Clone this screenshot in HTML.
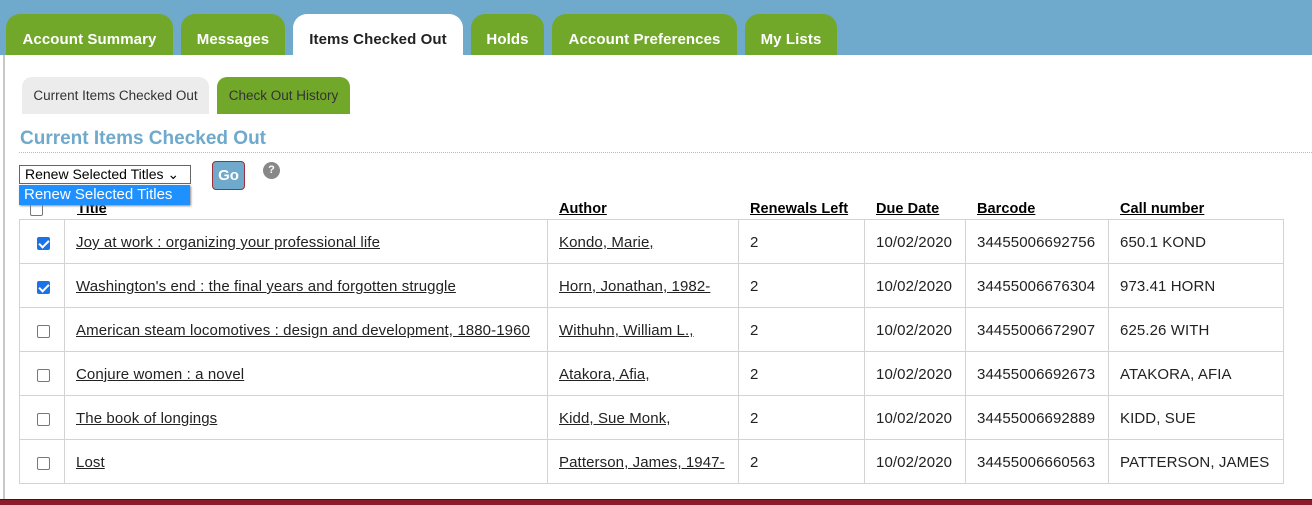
<!DOCTYPE html>
<html><head><style>
*{margin:0;padding:0;box-sizing:border-box}
body{width:1312px;height:505px;overflow:hidden;background:#fff;font-family:"Liberation Sans",Arial,sans-serif;position:relative}
.top{position:absolute;left:0;top:0;width:1312px;height:55px;background:#6fa9cb}
.lb{position:absolute;left:3px;top:55px;width:2px;height:450px;background:#c8c8c8}
.tab{position:absolute;top:14px;height:41px;background:#72a82a;color:#fff;font-weight:bold;font-size:15px;border-radius:14px 14px 0 0;text-align:center;line-height:51px;letter-spacing:.1px}
.tab.a{background:#fff;color:#222}
.st{position:absolute;top:77px;height:37px;font-size:13.5px;line-height:37px;text-align:center;border-radius:10px 10px 0 0;color:#333}
h2{position:absolute;left:20px;top:128px;font-size:19px;color:#6fa9cb;font-weight:bold}
.dot{position:absolute;left:19px;right:0;top:152px;border-top:1px dotted #bbb}
.sel{position:absolute;left:19px;top:165px;width:172px;height:19px;border:1px solid #666;font-size:14px;line-height:17px;padding-left:5px;color:#000;background:#fff}
.dd{position:absolute;left:19px;top:185px;width:171px;height:20px;background:#1e90ff;color:#fff;font-size:15px;line-height:20px;padding-left:5px;box-shadow:1px 1px 2px #888}
.go{position:absolute;left:212px;top:161px;width:33px;height:29px;background:#6fa9cb;border:1px solid #9b2f3c;border-radius:4px;color:#fff;font-weight:bold;font-size:15px;text-align:center;line-height:27px}
.q{position:absolute;left:263px;top:162px;width:17px;height:17px;border-radius:50%;background:#888;color:#fff;font-size:11px;font-weight:bold;text-align:center;line-height:17px}
.h{position:absolute;top:201px;font-size:14.5px;font-weight:bold;text-decoration:underline;color:#000;letter-spacing:.05px}
table{position:absolute;left:19px;top:219px;border-collapse:collapse;font-size:15px;letter-spacing:.1px;color:#222}
td{border:1px solid #d3d3d3;height:44px;padding-left:11px;padding-top:2px;white-space:nowrap}
td a{color:#222;text-decoration:underline}
.cb{width:13px;height:13px;border:1px solid #777;border-radius:2px;display:inline-block;margin-left:6px;vertical-align:middle}
.cb.c{background:#1a73e8;border-color:#1a73e8;position:relative}
.cb.c:after{content:"";position:absolute;left:3px;top:0px;width:4px;height:8px;border:solid #fff;border-width:0 2px 2px 0;transform:rotate(45deg)}
.bot{position:absolute;left:0;top:499px;width:1312px;height:6px;background:#8b1d2a;border-top:1px solid #222}
</style></head><body>
<div class="top"></div><div class="lb"></div>
<div class="tab" style="left:6px;width:167px">Account Summary</div>
<div class="tab" style="left:181px;width:104px">Messages</div>
<div class="tab a" style="left:293px;width:170px">Items Checked Out</div>
<div class="tab" style="left:471px;width:73px">Holds</div>
<div class="tab" style="left:552px;width:185px">Account Preferences</div>
<div class="tab" style="left:745px;width:92px">My Lists</div>
<div class="st" style="left:22px;width:187px;background:#ececec">Current Items Checked Out</div>
<div class="st" style="left:217px;width:133px;background:#72a82a">Check Out History</div>
<h2>Current Items Checked Out</h2>
<div class="dot"></div>
<div class="sel">Renew Selected Titles &#8964;</div>
<div class="go">Go</div><div class="q">?</div>
<div class="h" style="left:77px">Title</div>
<div class="h" style="left:559px">Author</div>
<div class="h" style="left:750px">Renewals Left</div>
<div class="h" style="left:876px">Due Date</div>
<div class="h" style="left:977px">Barcode</div>
<div class="h" style="left:1120px">Call number</div>
<span class="cb" style="position:absolute;left:30px;top:203px;margin:0"></span>
<div class="dd">Renew Selected Titles</div>
<table>
<colgroup><col style="width:45px"><col style="width:483px"><col style="width:191px"><col style="width:126px"><col style="width:101px"><col style="width:143px"><col style="width:175px"></colgroup>
<tr><td><span class="cb c"></span></td><td><a>Joy at work : organizing your professional life</a></td><td><a>Kondo, Marie,</a></td><td>2</td><td>10/02/2020</td><td>34455006692756</td><td>650.1 KOND</td></tr>
<tr><td><span class="cb c"></span></td><td><a>Washington's end : the final years and forgotten struggle</a></td><td><a>Horn, Jonathan, 1982-</a></td><td>2</td><td>10/02/2020</td><td>34455006676304</td><td>973.41 HORN</td></tr>
<tr><td><span class="cb"></span></td><td><a>American steam locomotives : design and development, 1880-1960</a></td><td><a>Withuhn, William L.,</a></td><td>2</td><td>10/02/2020</td><td>34455006672907</td><td>625.26 WITH</td></tr>
<tr><td><span class="cb"></span></td><td><a>Conjure women : a novel</a></td><td><a>Atakora, Afia,</a></td><td>2</td><td>10/02/2020</td><td>34455006692673</td><td>ATAKORA, AFIA</td></tr>
<tr><td><span class="cb"></span></td><td><a>The book of longings</a></td><td><a>Kidd, Sue Monk,</a></td><td>2</td><td>10/02/2020</td><td>34455006692889</td><td>KIDD, SUE</td></tr>
<tr><td><span class="cb"></span></td><td><a>Lost</a></td><td><a>Patterson, James, 1947-</a></td><td>2</td><td>10/02/2020</td><td>34455006660563</td><td>PATTERSON, JAMES</td></tr>
</table>
<div class="bot"></div>
</body></html>
